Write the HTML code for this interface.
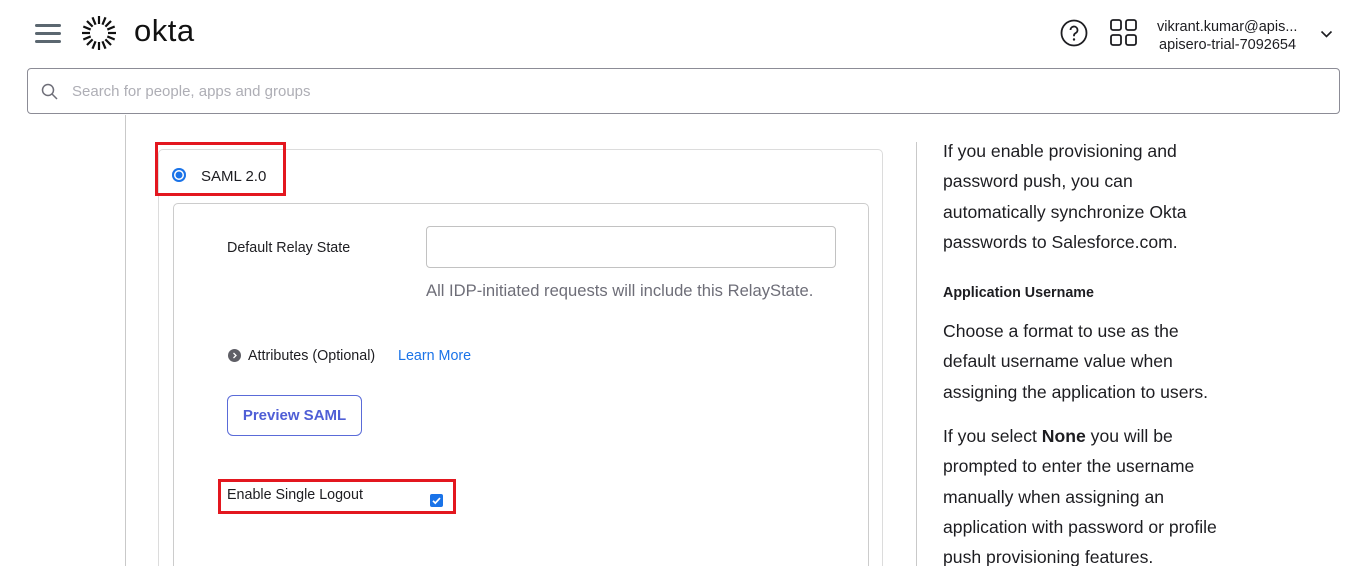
<!DOCTYPE html>
<html><head><style>
*{box-sizing:border-box;margin:0;padding:0}
html,body{width:1349px;height:566px;overflow:hidden}
body{background:#fff;font-family:"Liberation Sans",sans-serif;color:#1d1d21;position:relative}
.a{position:absolute}
.t{font-size:14.3px;color:#1d1d21}
.r{font-size:17.6px;color:#1d1d21;line-height:30.3px}
</style></head><body>
<div class="a" style="left:35px;top:24px;width:26px;height:3px;background:#5b6770;border-radius:2px"></div>
<div class="a" style="left:35px;top:32px;width:26px;height:3px;background:#5b6770;border-radius:2px"></div>
<div class="a" style="left:35px;top:40px;width:26px;height:3px;background:#5b6770;border-radius:2px"></div>
<svg class="a" style="left:81px;top:15px" width="36" height="36" viewBox="-18 -18 36 36">
<g stroke="#111" stroke-width="2.2">
<line x1="0" y1="-9" x2="0" y2="-17"/><line x1="0" y1="-9" x2="0" y2="-17" transform="rotate(22.5)"/><line x1="0" y1="-9" x2="0" y2="-17" transform="rotate(45)"/><line x1="0" y1="-9" x2="0" y2="-17" transform="rotate(67.5)"/><line x1="0" y1="-9" x2="0" y2="-17" transform="rotate(90)"/><line x1="0" y1="-9" x2="0" y2="-17" transform="rotate(112.5)"/><line x1="0" y1="-9" x2="0" y2="-17" transform="rotate(135)"/><line x1="0" y1="-9" x2="0" y2="-17" transform="rotate(157.5)"/><line x1="0" y1="-9" x2="0" y2="-17" transform="rotate(180)"/><line x1="0" y1="-9" x2="0" y2="-17" transform="rotate(202.5)"/><line x1="0" y1="-9" x2="0" y2="-17" transform="rotate(225)"/><line x1="0" y1="-9" x2="0" y2="-17" transform="rotate(247.5)"/><line x1="0" y1="-9" x2="0" y2="-17" transform="rotate(270)"/><line x1="0" y1="-9" x2="0" y2="-17" transform="rotate(292.5)"/><line x1="0" y1="-9" x2="0" y2="-17" transform="rotate(315)"/><line x1="0" y1="-9" x2="0" y2="-17" transform="rotate(337.5)"/>
</g></svg>
<div class="a" style="left:134px;top:13px;font-size:31px;color:#111;letter-spacing:0.5px">okta</div>
<svg class="a" style="left:1060px;top:19px" width="28" height="28" viewBox="0 0 28 28"><circle cx="14" cy="14" r="12.5" fill="none" stroke="#1d1d21" stroke-width="1.8"/><path d="M10.5 11a3.5 3.5 0 1 1 5 3.2c-1 .5-1.5 1.2-1.5 2.3v.8" fill="none" stroke="#1d1d21" stroke-width="1.8"/><circle cx="14" cy="20.5" r="1.2" fill="#1d1d21"/></svg>
<svg class="a" style="left:1110px;top:19px" width="27" height="27" viewBox="0 0 27 27" fill="none" stroke="#1d1d21" stroke-width="1.8"><rect x="1" y="1" width="10" height="10" rx="2"/><rect x="16" y="1" width="10" height="10" rx="2"/><rect x="1" y="16" width="10" height="10" rx="2"/><rect x="16" y="16" width="10" height="10" rx="2"/></svg>
<div class="a" style="left:1157px;top:19px;font-size:14.5px">vikrant.kumar@apis...</div>
<div class="a" style="left:1159px;top:37px;font-size:14.5px">apisero-trial-7092654</div>
<svg class="a" style="left:1320px;top:30px" width="13" height="9" viewBox="0 0 13 9"><path d="M1.5 1.5l5 5 5-5" fill="none" stroke="#1d1d21" stroke-width="1.6"/></svg>
<div class="a" style="left:27px;top:68px;width:1313px;height:46px;border:1px solid #8c8c96;border-radius:4px"></div>
<svg class="a" style="left:41px;top:83px" width="18" height="18" viewBox="0 0 18 18"><circle cx="7" cy="7" r="5.5" fill="none" stroke="#6e6e78" stroke-width="1.5"/><path d="M11 11l5 5" stroke="#6e6e78" stroke-width="1.5"/></svg>
<div class="a" style="left:72px;top:83px;font-size:15px;color:#aeaeb5">Search for people, apps and groups</div>
<div class="a" style="left:125px;top:115px;width:1px;height:451px;background:#c9c9c9"></div>
<div class="a" style="left:158px;top:149px;width:725px;height:430px;border:1px solid #dcdcdc;border-radius:5px"></div>
<div class="a" style="left:173px;top:203px;width:696px;height:380px;border:1px solid #ccc;border-radius:5px"></div>
<div class="a" style="left:155px;top:142px;width:131px;height:54px;border:3px solid #e3171f"></div>
<div class="a" style="left:172px;top:168px;width:14px;height:14px;border-radius:50%;background:#1a73e8;box-shadow:inset 0 0 0 2px #1a73e8,inset 0 0 0 3.5px #fff"></div>
<div class="a" style="left:201px;top:168px;font-size:15px;color:#1d1d21">SAML 2.0</div>
<div class="a t" style="left:227px;top:240px">Default Relay State</div>
<div class="a" style="left:426px;top:226px;width:410px;height:42px;border:1px solid #c2c2c2;border-radius:4px"></div>
<div class="a" style="left:426px;top:281px;font-size:16.6px;color:#6e6e78">All IDP-initiated requests will include this RelayState.</div>
<div class="a" style="left:228px;top:349px;width:13px;height:13px;border-radius:50%;background:#5f5f66"></div>
<svg class="a" style="left:231px;top:352px" width="7" height="7" viewBox="0 0 7 7"><path d="M2.5 1l2.5 2.5-2.5 2.5" fill="none" stroke="#fff" stroke-width="1.3"/></svg>
<div class="a t" style="left:248px;top:348px">Attributes (Optional)</div>
<div class="a" style="left:398px;top:348px;font-size:14.3px;color:#1a73e8">Learn More</div>
<div class="a" style="left:227px;top:395px;width:135px;height:41px;border:1px solid #5a6bd8;border-radius:6px;text-align:center;line-height:39px;font-size:15px;font-weight:bold;color:#4f5ed6">Preview SAML</div>
<div class="a" style="left:218px;top:479px;width:238px;height:35px;border:3px solid #e3171f"></div>
<div class="a t" style="left:227px;top:487px">Enable Single Logout</div>
<div class="a" style="left:430px;top:494px;width:13px;height:13px;border-radius:2px;background:#1a73e8"></div>
<svg class="a" style="left:430px;top:494px" width="13" height="13" viewBox="0 0 13 13"><path d="M3 6.8l2.3 2.3 4.7-5" fill="none" stroke="#fff" stroke-width="1.7"/></svg>
<div class="a" style="left:916px;top:142px;width:1px;height:424px;background:#c9c9c9"></div>
<div class="a r" style="left:943px;top:136px;width:300px">If you enable provisioning and<br>password push, you can<br>automatically synchronize Okta<br>passwords to Salesforce.com.</div>
<div class="a" style="left:943px;top:285px;font-size:14.3px;font-weight:bold;color:#1d1d21">Application Username</div>
<div class="a r" style="left:943px;top:316px;width:300px">Choose a format to use as the<br>default username value when<br>assigning the application to users.</div>
<div class="a r" style="left:943px;top:421px;width:300px">If you select <b>None</b> you will be<br>prompted to enter the username<br>manually when assigning an<br>application with password or profile<br>push provisioning features.</div>
</body></html>
